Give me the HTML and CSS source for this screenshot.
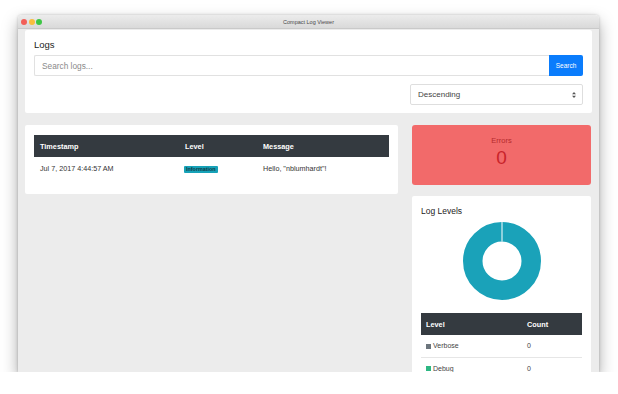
FILE: index.html
```html
<!DOCTYPE html>
<html>
<head>
<meta charset="utf-8">
<link rel="stylesheet" href="styles.css">
</head>
<body>
<div class="window">
  <div class="titlebar">
    <div class="lights"><span class="light red"></span><span class="light yellow"></span><span class="light green"></span></div>
    <div class="title">Compact Log Viewer</div>
    <div></div>
  </div>
  <div class="content">
    <div class="card top-card">
      <div class="card-title">Logs</div>
      <div class="search-group">
        <div class="search-input">Search logs...</div>
        <div class="search-btn">Search</div>
      </div>
      <div class="sort-row">
        <div class="select">
          <span>Descending</span>
          <svg class="arrows" width="4" height="6" viewBox="0 0 4 6"><path d="M2 0 L4 2.3 L0 2.3 Z M2 6 L4 3.7 L0 3.7 Z" fill="#555"/></svg>
        </div>
      </div>
    </div>
    <div class="main">
      <div class="card table-card">
        <table class="log-table">
          <thead><tr><th class="c-ts">Timestamp</th><th class="c-lv">Level</th><th>Message</th></tr></thead>
          <tbody><tr><td>Jul 7, 2017 4:44:57 AM</td><td><span class="badge">Information</span></td><td>Hello, "nblumhardt"!</td></tr></tbody>
        </table>
      </div>
      <div class="side">
        <div class="errors">
          <div class="errors-label">Errors</div>
          <div class="errors-count">0</div>
        </div>
        <div class="card levels-card">
          <div class="levels-title">Log Levels</div>
          <div class="donut-wrap">
            <svg width="78" height="78" viewBox="0 0 78 78">
              <circle cx="39" cy="39" r="29.25" fill="none" stroke="#1aa2b9" stroke-width="19.5"/>
              <line x1="39" y1="0" x2="39" y2="19.5" stroke="#fff" stroke-width="1"/>
            </svg>
          </div>
          <table class="level-table">
            <thead><tr><th class="c-level">Level</th><th>Count</th></tr></thead>
            <tbody>
              <tr><td><span class="sw sw-verbose"></span>Verbose</td><td>0</td></tr>
              <tr><td><span class="sw sw-debug"></span>Debug</td><td>0</td></tr>
            </tbody>
          </table>
        </div>
      </div>
    </div>
  </div>
</div>
</body>
</html>
```
FILE: styles.css
```css
* { box-sizing: border-box; }
html, body { margin: 0; }
body {
  background: #ffffff;
  padding: 15px 0 0 18px;
  font-family: "Liberation Sans", Arial, sans-serif;
  color: #333;
}
.window {
  width: 581px;
  height: 357px;
  border-radius: 4px 4px 0 0;
  overflow: hidden;
  display: flex;
  flex-direction: column;
  box-shadow: 0 7px 16px rgba(0,0,0,0.34), 0 0 3px rgba(0,0,0,0.22);
}
.titlebar {
  height: 14px;
  flex: none;
  background: linear-gradient(#ececec, #d9d9d9);
  border-bottom: 1px solid #c9c9c9;
  display: grid;
  grid-template-columns: 1fr auto 1fr;
  align-items: center;
}
.lights { display: flex; gap: 1.5px; padding-left: 3px; }
.light { width: 6px; height: 6px; border-radius: 50%; display: block; }
.red { background: #f25f58; }
.yellow { background: #f9be3e; }
.green { background: #3ec645; }
.title { font-size: 5.5px; color: #4a4a4a; }
.content {
  flex: 1;
  background: #ececec;
  padding: 1px 7px 0 7px;
  overflow: hidden;
}
.card { background: #fff; border-radius: 2px; }
.top-card { padding: 9px 9px 8px; }
.card-title { font-size: 9.5px; line-height: 11px; margin-bottom: 5px; color: #222; }
.search-group { display: flex; height: 21px; }
.search-input {
  flex: 1;
  border: 1px solid #e1e1e1;
  border-right: none;
  border-radius: 2px 0 0 2px;
  padding-left: 7px;
  font-size: 8.3px;
  color: #8a8a8a;
  display: flex;
  align-items: center;
}
.search-btn {
  width: 34px;
  background: #0a7cfc;
  color: #fff;
  font-size: 6.5px;
  border-radius: 0 2px 2px 0;
  display: flex;
  align-items: center;
  justify-content: center;
}
.sort-row { display: flex; justify-content: flex-end; margin-top: 8px; }
.select {
  width: 173px;
  height: 21px;
  border: 1px solid #dedede;
  border-radius: 2px;
  display: flex;
  align-items: center;
  justify-content: space-between;
  padding: 0 6px 0 7px;
  font-size: 8px;
  color: #444;
}
.main {
  margin-top: 12px;
  display: grid;
  grid-template-columns: 373px 179px;
  gap: 14px;
  align-items: start;
}
.table-card { padding: 10px 9px 14px; }
table { border-collapse: collapse; width: 100%; }
.log-table th, .level-table th {
  background: #343a40;
  color: #fff;
  font-weight: bold;
  font-size: 7.3px;
  text-align: left;
  height: 22px;
  padding: 0 6px;
}
.log-table .c-ts { width: 145px; }
.log-table .c-lv { width: 78px; }
.log-table td {
  font-size: 7.2px;
  height: 23px;
  padding: 0 6px;
  color: #333;
}
.badge {
  display: inline-block;
  background: #17a2b8;
  color: #113a44;
  font-size: 5.4px;
  font-weight: bold;
  line-height: 6px;
  padding: 0.5px 2px;
  border-radius: 1px;
  margin-left: -1px;
}
.side { display: flex; flex-direction: column; gap: 11px; }
.errors {
  height: 60px;
  background: #f26a6a;
  border-radius: 3px;
  display: flex;
  flex-direction: column;
  align-items: center;
}
.errors-label { font-size: 7.5px; color: #b52a2d; margin-top: 11px; line-height: 9px; }
.errors-count { font-size: 19px; color: #c9242b; line-height: 20px; margin-top: 3px; }
.levels-card { padding: 9px 9px 0; height: 200px; }
.levels-title { font-size: 8.5px; line-height: 12px; color: #222; }
.donut-wrap { display: flex; justify-content: center; margin-top: 5px; height: 78px; }
.donut-wrap svg { display: block; }
.level-table { margin-top: 13px; }
.level-table .c-level { width: 101px; }
.level-table th { padding: 0 5px; }
.level-table td {
  font-size: 7px;
  height: 22px;
  padding: 0 5px;
  border-top: 1px solid #e6e6e6;
  color: #444;
}
.level-table tbody tr:first-child td { border-top: none; }
.sw { display: inline-block; width: 5px; height: 5px; margin-right: 2px; vertical-align: -0.5px; }
.sw-verbose { background: #6c757d; }
.sw-debug { background: #2db783; }
```
